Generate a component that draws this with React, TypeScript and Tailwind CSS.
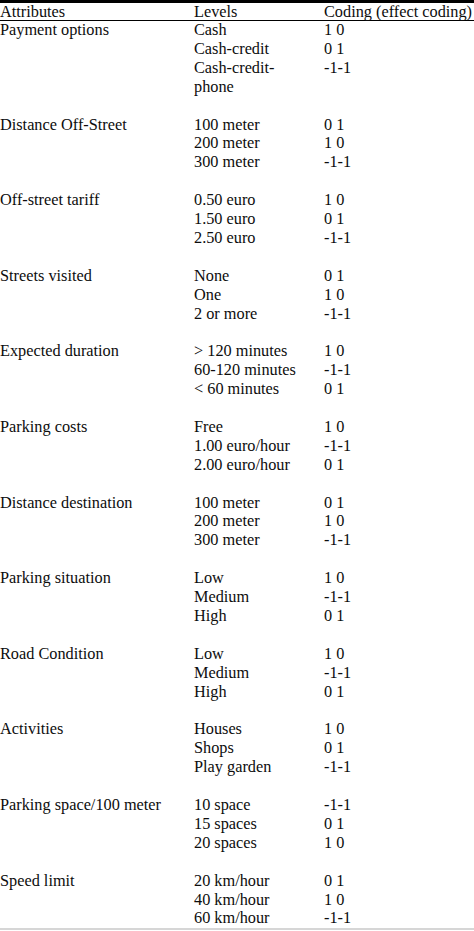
const groups: { attribute: string; levels: string[]; codes: string[] }[] = [
  { attribute: 'Payment options', levels: ['Cash', 'Cash-credit', 'Cash-credit-', 'phone'], codes: ['1 0', '0 1', '-1-1'] },
  { attribute: 'Distance Off-Street', levels: ['100 meter', '200 meter', '300 meter'], codes: ['0 1', '1 0', '-1-1'] },
  { attribute: 'Off-street tariff', levels: ['0.50 euro', '1.50 euro', '2.50 euro'], codes: ['1 0', '0 1', '-1-1'] },
  { attribute: 'Streets visited', levels: ['None', 'One', '2 or more'], codes: ['0 1', '1 0', '-1-1'] },
  { attribute: 'Expected duration', levels: ['> 120 minutes', '60-120 minutes', '< 60 minutes'], codes: ['1 0', '-1-1', '0 1'] },
  { attribute: 'Parking costs', levels: ['Free', '1.00 euro/hour', '2.00 euro/hour'], codes: ['1 0', '-1-1', '0 1'] },
  { attribute: 'Distance destination', levels: ['100 meter', '200 meter', '300 meter'], codes: ['0 1', '1 0', '-1-1'] },
  { attribute: 'Parking situation', levels: ['Low', 'Medium', 'High'], codes: ['1 0', '-1-1', '0 1'] },
  { attribute: 'Road Condition', levels: ['Low', 'Medium', 'High'], codes: ['1 0', '-1-1', '0 1'] },
  { attribute: 'Activities', levels: ['Houses', 'Shops', 'Play garden'], codes: ['1 0', '0 1', '-1-1'] },
  { attribute: 'Parking space/100 meter', levels: ['10 space', '15 spaces', '20 spaces'], codes: ['-1-1', '0 1', '1 0'] },
  { attribute: 'Speed limit', levels: ['20 km/hour', '40 km/hour', '60 km/hour'], codes: ['0 1', '1 0', '-1-1'] },
];

const App = () => {
  return (
    <div className="w-[474px] bg-white text-[#0d0d0d] font-['Liberation_Serif','Times_New_Roman',serif] text-[16.3px] leading-[18.9px] overflow-hidden">
      <div className="border-t-[3px] border-black">
        {/* Header */}
        <div className="grid grid-cols-[194px_130px_1fr] h-[18px] leading-[18px] items-center border-b border-black whitespace-nowrap">
          <span>Attributes</span>
          <span>Levels</span>
          <span>Coding (effect coding)</span>
        </div>

        {/* Body */}
        <div className="border-b-2 border-[#d6d6d6]">
          {groups.map((g, i) => (
            <div
              key={g.attribute}
              className={`grid grid-cols-[194px_130px_1fr] whitespace-nowrap ${i < groups.length - 1 ? 'pb-[18.9px]' : ''}`}
            >
              <div>{g.attribute}</div>
              <div className="flex flex-col">
                {g.levels.map(l => (
                  <span key={l}>{l}</span>
                ))}
              </div>
              <div className="flex flex-col">
                {g.codes.map((c, j) => (
                  <span key={j}>{c}</span>
                ))}
              </div>
            </div>
          ))}
        </div>
      </div>
    </div>
  );
};

export default App;
